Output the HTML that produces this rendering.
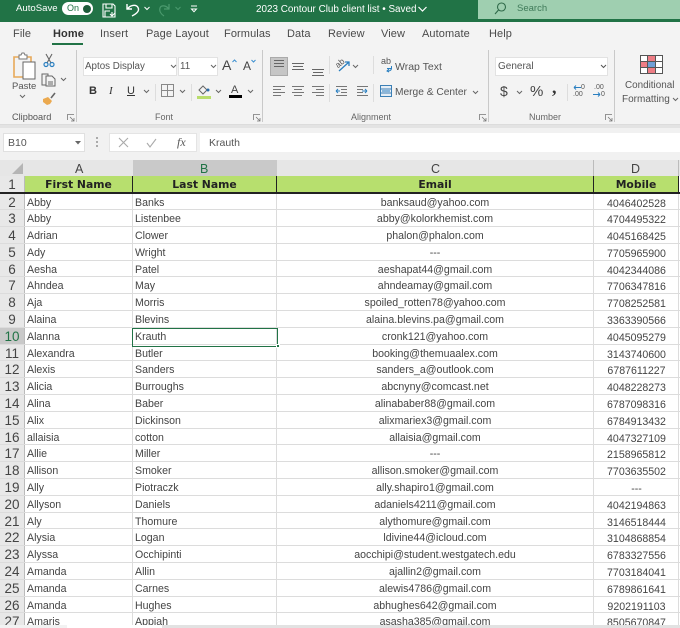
<!DOCTYPE html>
<html><head><meta charset="utf-8"><style>
html,body{margin:0;padding:0;background:#fff}
#p{position:relative;width:680px;height:628px;overflow:hidden;font-family:"Liberation Sans",sans-serif;color:#444;background:#fff;filter:blur(.3px)}
.a{position:absolute;white-space:nowrap}
.box{position:absolute;background:#fff;border:1px solid #e2e2e2;box-sizing:border-box}
.sep{position:absolute;width:1px;background:#c9c9c9}
svg{position:absolute;overflow:visible}
.t{font-size:11px;color:#4a4a4a;top:28px;letter-spacing:.1px}
.g{font-size:9px;color:#666;top:112px}
#grid{position:absolute;left:0;top:176px;width:680px}
.r{display:flex;height:16.8px;box-sizing:border-box;border-bottom:1px solid #dcdcdc;font-size:10.6px;line-height:18px;color:#444}
.r div{box-sizing:border-box;height:100%;white-space:nowrap;overflow:hidden;border-right:1px solid #dcdcdc}
.r .n{width:25px;background:#e8e8e8;font-size:13.5px;text-align:center;color:#444;border-right:1px solid #bbb;line-height:17px}
.r .A{width:108px;padding-left:2px}
.r .B{width:144px;padding-left:2px}
.r .C{width:317px;text-align:center}
.r .D{width:85px;text-align:center;line-height:20px;padding-left:1px}
.h{height:17.5px;border-bottom:2px solid #222}
.h div{background:#b7df6e;font-family:"DejaVu Sans",sans-serif;font-weight:bold;font-size:10.8px;color:#222;text-align:center;padding:0;border-right:1px solid #222;line-height:17px}
.h .n{background:#e8e8e8;font-family:"Liberation Sans",sans-serif;font-weight:normal;font-size:13.5px;border-right:1px solid #bbb}
</style></head><body><div id="p">

<div class="a" style="left:0;top:0;width:680px;height:22px;background:#217346"></div>
<div class="a" style="left:478px;top:0;width:202px;height:19px;background:#9fcfb0"></div>
<div class="a" style="left:16px;top:3px;font-size:9.600px;line-height:12px;color:#fff">AutoSave</div>
<div class="a" style="left:62px;top:2px;width:31px;height:13px;background:#fff;border-radius:7px"></div>
<div class="a" style="left:67px;top:3px;font-size:9px;color:#217346">On</div>
<div class="a" style="left:83px;top:4.500px;width:8px;height:8px;background:#1d5c3a;border-radius:50%"></div>
<svg style="left:102px;top:3px" width="16" height="16" fill="none" stroke="#fff" stroke-width="1.1"><path d="M1 1h10l2 2v11H1zM4 1v4h6V1M3 14V8h5M10 9v4M8 11l2 2 3-3"/></svg>
<svg style="left:126px;top:3px" width="16" height="14" fill="none" stroke="#fff" stroke-width="1.4"><path d="M1 1v5h5M1.500 6C4 2 10 1 12 4.500S10 11 6 13"/></svg>
<svg style="left:144px;top:6px" width="6" height="5" fill="none" stroke="#fff"><path d="M.5 1 3 3.500 5.500 1"/></svg>
<svg style="left:158px;top:3px" width="16" height="14" fill="none" stroke="#4b9a6e" stroke-width="1.2"><path d="M11 1v5H6M11 6C8 2 3 2 2 5s1 6 4 8"/></svg>
<svg style="left:175px;top:6px" width="6" height="5" fill="none" stroke="#4b9a6e"><path d="M.5 1 3 3.500 5.500 1"/></svg>
<svg style="left:190px;top:5px" width="8" height="8" fill="none" stroke="#fff"><path d="M1 1h6M1.500 4 4 6.800 6.500 4z"/></svg>
<div class="a" style="left:256px;top:4px;font-size:9.900px;color:#fff">2023 Contour Club client list • Saved</div>
<svg style="left:418px;top:6px" width="9" height="6" fill="none" stroke="#fff" stroke-width="1.2"><path d="M.5 1 4.500 5 8.500 1"/></svg>
<svg style="left:494px;top:2px" width="13" height="13" fill="none" stroke="#2f6a49" stroke-width="1.1"><circle cx="7.500" cy="5" r="4"/><path d="M4.500 8 1 12"/></svg>
<div class="a" style="left:517px;top:3px;font-size:9.500px;color:#3f7a59">Search</div>

<div class="a" style="left:0;top:22px;width:680px;height:103px;background:#f3f3f3"></div>
<div class="a t" style="left:13px">File</div>
<div class="a t" style="left:53px;color:#333;font-weight:bold">Home</div>
<div class="a" style="left:52px;top:43px;width:31px;height:2px;background:#217346"></div>
<div class="a t" style="left:100px">Insert</div>
<div class="a t" style="left:146px">Page Layout</div>
<div class="a t" style="left:224px">Formulas</div>
<div class="a t" style="left:287px">Data</div>
<div class="a t" style="left:328px">Review</div>
<div class="a t" style="left:381px">View</div>
<div class="a t" style="left:422px">Automate</div>
<div class="a t" style="left:489px">Help</div>

<svg style="left:13px;top:52px" width="24" height="28" fill="none"><path d="M1 5h17v20H1z" stroke="#e8a95a" stroke-width="1.600"/><path d="M6 7V3h2l1-2h2l1 2h2v4z" fill="#fff" stroke="#777"/><path d="M10 10h12v17H10z" fill="#fff" stroke="#666"/></svg>
<div class="a" style="left:12px;top:81px;font-size:9.500px;color:#555">Paste</div>
<svg style="left:19px;top:94px" width="7" height="5" fill="none" stroke="#666"><path d="M1 1l2.500 2.500L6 1"/></svg>
<svg style="left:43px;top:53px" width="12" height="14" fill="none"><path d="M3 1l5 9M9 1 4 10" stroke="#666" stroke-width="1.100"/><circle cx="3" cy="11.500" r="2" stroke="#2a7fc0" stroke-width="1.200"/><circle cx="9" cy="11.500" r="2" stroke="#2a7fc0" stroke-width="1.200"/></svg>
<svg style="left:41px;top:73px" width="16" height="14" fill="none" stroke="#666"><path d="M5 12H1V1h6v2"/><path d="M5 3h6l3 3v7H5z" fill="#f3f3f3"/><path d="M7 9h5M7 11h5"/></svg>
<svg style="left:60px;top:77px" width="7" height="5" fill="none" stroke="#666"><path d="M1 1l2.500 2.500L6 1"/></svg>
<svg style="left:42px;top:92px" width="14" height="13" fill="none"><path d="M1 7l5-2 4 4-2 3-3 1-4-3z" fill="#eba94f"/><path d="M9 6l4-5" stroke="#666" stroke-width="1.600"/></svg>
<div class="a g" style="left:12px;color:#555;font-size:9.200px">Clipboard</div>
<svg style="left:67px;top:114px" width="8" height="8" fill="none" stroke="#777" stroke-width=".8"><path d="M.5 6V.5H7M3 3l4 4M7 4v3H4"/></svg>
<div class="sep" style="left:76px;top:50px;height:72px"></div>

<div class="box" style="left:83px;top:57px;width:94px;height:19px"></div>
<div class="a" style="left:85px;top:61px;font-size:9.800px;color:#555">Aptos Display</div>
<svg style="left:170px;top:64px" width="7" height="5" fill="none" stroke="#666"><path d="M1 1l2.500 2.500L6 1"/></svg>
<div class="box" style="left:178px;top:57px;width:40px;height:19px"></div>
<div class="a" style="left:180px;top:61px;font-size:9.800px;color:#555">11</div>
<svg style="left:210px;top:64px" width="7" height="5" fill="none" stroke="#666"><path d="M1 1l2.500 2.500L6 1"/></svg>
<div class="a" style="left:222px;top:57px;font-size:14px;color:#444">A</div>
<svg style="left:232px;top:59px" width="5" height="4" fill="none" stroke="#3b8fcf"><path d="M.5 3 2.500 1l2 2"/></svg>
<div class="a" style="left:243px;top:59px;font-size:12px;color:#444">A</div>
<svg style="left:251px;top:59px" width="5" height="4" fill="none" stroke="#3b8fcf"><path d="M.5 1l2 2 2-2"/></svg>
<div class="a" style="left:89px;top:85px;font-size:11px;font-weight:bold;color:#333">B</div>
<div class="a" style="left:109px;top:85px;font-size:11px;font-style:italic;font-family:'Liberation Serif',serif;color:#333">I</div>
<div class="a" style="left:127px;top:85px;font-size:11px;text-decoration:underline;color:#333">U</div>
<svg style="left:143px;top:89px" width="7" height="5" fill="none" stroke="#666"><path d="M1 1l2.500 2.500L6 1"/></svg>
<div class="sep" style="left:155px;top:84px;height:17px;background:#ddd"></div>
<svg style="left:161px;top:84px" width="13" height="13" fill="none" stroke="#888"><path d="M.5.500h12v12H.5zM6.500.500v12M.5 6.500h12"/></svg>
<svg style="left:179px;top:89px" width="7" height="5" fill="none" stroke="#666"><path d="M1 1l2.500 2.500L6 1"/></svg>
<div class="sep" style="left:191px;top:84px;height:17px;background:#ddd"></div>
<svg style="left:197px;top:84px" width="14" height="15" fill="none"><path d="M2 6l4-4 4 4-4 4z" stroke="#666"/><circle cx="11" cy="6" r="1.500" fill="#2a6ca8"/><path d="M0 12h14v3H0z" fill="#b9dd6c"/></svg>
<svg style="left:215px;top:89px" width="7" height="5" fill="none" stroke="#666"><path d="M1 1l2.500 2.500L6 1"/></svg>
<div class="a" style="left:231px;top:84px;font-size:11px;color:#444">A</div>
<div class="a" style="left:229px;top:95px;width:13px;height:3px;background:#000"></div>
<svg style="left:247px;top:89px" width="7" height="5" fill="none" stroke="#666"><path d="M1 1l2.500 2.500L6 1"/></svg>
<div class="a g" style="left:155px">Font</div>
<svg style="left:253px;top:114px" width="8" height="8" fill="none" stroke="#777" stroke-width=".8"><path d="M.5 6V.5H7M3 3l4 4M7 4v3H4"/></svg>
<div class="sep" style="left:262px;top:50px;height:72px"></div>

<div class="a" style="left:270px;top:57px;width:18px;height:19px;background:#c6c6c6;border:1px solid #aaa;box-sizing:border-box"></div>
<svg style="left:272px;top:59px" width="52" height="17" stroke="#666"><path d="M2 1.500h10M2 4.500h10M2 7.500h10"/><path d="M20 4.500h12M21 7.500h10M20 10.500h12"/><path d="M40 10.500h12M41 13.500h10M40 16.500h12"/></svg>
<div class="sep" style="left:329px;top:56px;height:18px;background:#ddd"></div>
<div class="a" style="left:335px;top:58px;font-size:8.500px;color:#555;transform:rotate(-40deg);transform-origin:50% 50%">ab</div>
<svg style="left:336px;top:60px" width="15" height="12" fill="none" stroke="#2a7fc0" stroke-width="1.300"><path d="M3 11 13 2M9 2h4v4"/></svg>
<svg style="left:352px;top:64px" width="7" height="5" fill="none" stroke="#666"><path d="M1 1l2.500 2.500L6 1"/></svg>
<div class="sep" style="left:373px;top:56px;height:18px;background:#ddd"></div>
<svg style="left:273px;top:85px" width="51" height="13" stroke="#777"><path d="M0 1.500h12M0 4.500h8M0 7.500h12M0 10.500h8"/><path d="M19 1.500h12M21 4.500h8M19 7.500h12M21 10.500h8"/><path d="M39 1.500h12M43 4.500h8M39 7.500h12M43 10.500h8"/></svg>
<div class="sep" style="left:329px;top:84px;height:18px;background:#ddd"></div>
<svg style="left:335px;top:85px" width="34" height="13" fill="none" stroke="#777"><path d="M1 1.500h11M6 4.500h6M6 7.500h6M1 10.500h11"/><path d="M1 6h4M1 6l2-2M1 6l2 2" stroke="#2a7fc0"/><path d="M22 1.500h11M22 4.500h6M22 7.500h6M22 10.500h11"/><path d="M27 6h5M32 6l-2-2M32 6l-2 2" stroke="#2a7fc0"/></svg>
<div class="sep" style="left:373px;top:84px;height:18px;background:#ddd"></div>
<div class="a" style="left:381px;top:57px;font-size:9px;color:#555;line-height:9px">ab</div>
<svg style="left:381px;top:65px" width="12" height="7" fill="none" stroke="#2a7fc0"><path d="M6 3.500h4.500V1M10.500 3.500C10 6 8 6 6 6M8 4 6 6l2 1"/></svg>
<div class="a" style="left:395px;top:61px;font-size:10.500px;color:#555">Wrap Text</div>
<svg style="left:380px;top:85px" width="12" height="12"><path d="M.5.500h11v11H.5z" fill="#e5eef6" stroke="#3b7fb5"/><path d="M.5 4h11M.5 8h11" stroke="#3b7fb5"/><path d="M2 6h8" stroke="#2a7fc0"/></svg>
<div class="a" style="left:395px;top:87px;font-size:10.200px;color:#555">Merge &amp; Center</div>
<svg style="left:472px;top:90px" width="7" height="5" fill="none" stroke="#666"><path d="M1 1l2.500 2.500L6 1"/></svg>
<div class="a g" style="left:351px">Alignment</div>
<svg style="left:479px;top:114px" width="8" height="8" fill="none" stroke="#777" stroke-width=".8"><path d="M.5 6V.5H7M3 3l4 4M7 4v3H4"/></svg>
<div class="sep" style="left:488px;top:50px;height:72px"></div>

<div class="box" style="left:495px;top:57px;width:113px;height:19px"></div>
<div class="a" style="left:498px;top:61px;font-size:10px;color:#555">General</div>
<svg style="left:600px;top:64px" width="7" height="5" fill="none" stroke="#555"><path d="M1 1l2.500 2.500L6 1"/></svg>
<div class="a" style="left:500px;top:83px;font-size:14px;color:#444">$</div>
<svg style="left:516px;top:90px" width="7" height="5" fill="none" stroke="#666"><path d="M1 1l2.500 2.500L6 1"/></svg>
<div class="a" style="left:530px;top:83px;font-size:15px;color:#444">%</div>
<div class="a" style="left:552px;top:77px;font-size:18px;font-weight:bold;color:#333;font-family:'Liberation Serif',serif">,</div>
<div class="sep" style="left:567px;top:84px;height:17px;background:#ddd"></div>
<svg style="left:573px;top:84px" width="9" height="7" fill="none" stroke="#2a7fc0"><path d="M1 3.500h7M1 3.500l2-2M1 3.500l2 2"/></svg>
<div class="a" style="left:581px;top:84px;font-size:7px;color:#555;line-height:7px">0</div>
<div class="a" style="left:573px;top:91px;font-size:7px;color:#555;line-height:7px">.00</div>
<div class="a" style="left:594px;top:84px;font-size:7px;color:#555;line-height:7px">.00</div>
<svg style="left:593px;top:91px" width="9" height="7" fill="none" stroke="#2a7fc0"><path d="M0 3.500h7M7 3.500l-2-2M7 3.500l-2 2"/></svg>
<div class="a" style="left:601px;top:91px;font-size:7px;color:#555;line-height:7px">0</div>
<div class="a g" style="left:529px">Number</div>
<svg style="left:605px;top:114px" width="8" height="8" fill="none" stroke="#777" stroke-width=".8"><path d="M.5 6V.5H7M3 3l4 4M7 4v3H4"/></svg>
<div class="sep" style="left:614px;top:50px;height:72px"></div>

<svg style="left:640px;top:55px" width="23" height="19"><path d="M0 0h23v19H0z" fill="#fff"/><path d="M7 0h9v6H7zM0 6h7v7H0zM7 13h9v6H7z" fill="#ee7d85"/><path d="M7 6h9v7H7z" fill="#6f9fd6"/><path d="M.5.500h22v18H.5zM7.500 0v19M15.500 0v19M0 6.500h23M0 12.500h23" fill="none" stroke="#555"/></svg>
<div class="a" style="left:625px;top:80px;font-size:9.900px;color:#555">Conditional</div>
<div class="a" style="left:622px;top:94px;font-size:10px;color:#555">Formatting</div>
<svg style="left:672px;top:97px" width="7" height="5" fill="none" stroke="#666"><path d="M1 1l2.500 2.500L6 1"/></svg>

<div class="a" style="left:0;top:124px;width:680px;height:1px;background:#dcdcdc"></div>
<div class="a" style="left:0;top:125px;width:680px;height:35px;background:#f1f1f1"></div>
<div class="a" style="left:0;top:125px;width:680px;height:3px;background:#e3e3e3"></div>
<div class="box" style="left:3px;top:133px;width:82px;height:19px;border-color:#e0e0e0"></div>
<div class="a" style="left:8px;top:137px;font-size:10.500px;color:#555">B10</div>
<svg style="left:75px;top:141px" width="6" height="4"><path d="M0 0h6L3 3.500z" fill="#666"/></svg>
<svg style="left:96px;top:137px" width="3" height="11" fill="#aaa"><path d="M0 0h2v2H0zM0 4h2v2H0zM0 8h2v2H0z"/></svg>
<div class="box" style="left:109px;top:133px;width:88px;height:19px;border-color:#e4e4e4"></div>
<svg style="left:118px;top:137px" width="50" height="12" fill="none" stroke="#aaa" stroke-width="1.100"><path d="M1 1l9 9M10 1l-9 9"/><path d="M29 6l3 4 6-8"/></svg>
<div class="a" style="left:177px;top:135px;font-size:12px;font-style:italic;font-family:'Liberation Serif',serif;color:#555">fx</div>
<div class="a" style="left:200px;top:133px;width:480px;height:19px;background:#fff"></div>
<div class="a" style="left:209px;top:137px;font-size:10.500px;color:#555">Krauth</div>

<div class="a" style="left:0;top:160px;width:680px;height:16px;background:#e6e6e6"></div>
<div class="a" style="left:133px;top:160px;width:144px;height:16px;background:#c9c9c9"></div>
<svg style="left:12px;top:163px" width="11" height="11"><path d="M11 0v11H0z" fill="#b5b5b5"/></svg>
<div class="a" style="left:75px;top:162px;font-size:12.500px;color:#444">A</div>
<div class="a" style="left:200px;top:162px;font-size:12.500px;color:#217346">B</div>
<div class="a" style="left:431px;top:162px;font-size:12.500px;color:#444">C</div>
<div class="a" style="left:631px;top:162px;font-size:12.500px;color:#444">D</div>
<div class="a" style="left:593px;top:160px;width:1px;height:16px;background:#bbb"></div>
<div class="a" style="left:678px;top:160px;width:1px;height:16px;background:#bbb"></div>

<div id="grid">
<div class="r h"><div class="n">1</div><div class="A" style="padding:0">First Name</div><div class="B" style="padding:0">Last Name</div><div class="C">Email</div><div class="D" style="line-height:17px;padding:0">Mobile</div></div>
<div class="r"><div class="n">2</div><div class="A">Abby</div><div class="B">Banks</div><div class="C">banksaud@yahoo.com</div><div class="D">4046402528</div></div>
<div class="r"><div class="n">3</div><div class="A">Abby</div><div class="B">Listenbee</div><div class="C">abby@kolorkhemist.com</div><div class="D">4704495322</div></div>
<div class="r"><div class="n">4</div><div class="A">Adrian</div><div class="B">Clower</div><div class="C">phalon@phalon.com</div><div class="D">4045168425</div></div>
<div class="r"><div class="n">5</div><div class="A">Ady</div><div class="B">Wright</div><div class="C">---</div><div class="D">7705965900</div></div>
<div class="r"><div class="n">6</div><div class="A">Aesha</div><div class="B">Patel</div><div class="C">aeshapat44@gmail.com</div><div class="D">4042344086</div></div>
<div class="r"><div class="n">7</div><div class="A">Ahndea</div><div class="B">May</div><div class="C">ahndeamay@gmail.com</div><div class="D">7706347816</div></div>
<div class="r"><div class="n">8</div><div class="A">Aja</div><div class="B">Morris</div><div class="C">spoiled_rotten78@yahoo.com</div><div class="D">7708252581</div></div>
<div class="r"><div class="n">9</div><div class="A">Alaina</div><div class="B">Blevins</div><div class="C">alaina.blevins.pa@gmail.com</div><div class="D">3363390566</div></div>
<div class="r"><div class="n" style="background:#c9c9c9;color:#217346">10</div><div class="A">Alanna</div><div class="B">Krauth</div><div class="C">cronk121@yahoo.com</div><div class="D">4045095279</div></div>
<div class="r"><div class="n">11</div><div class="A">Alexandra</div><div class="B">Butler</div><div class="C">booking@themuaalex.com</div><div class="D">3143740600</div></div>
<div class="r"><div class="n">12</div><div class="A">Alexis</div><div class="B">Sanders</div><div class="C">sanders_a@outlook.com</div><div class="D">6787611227</div></div>
<div class="r"><div class="n">13</div><div class="A">Alicia</div><div class="B">Burroughs</div><div class="C">abcnyny@comcast.net</div><div class="D">4048228273</div></div>
<div class="r"><div class="n">14</div><div class="A">Alina</div><div class="B">Baber</div><div class="C">alinababer88@gmail.com</div><div class="D">6787098316</div></div>
<div class="r"><div class="n">15</div><div class="A">Alix</div><div class="B">Dickinson</div><div class="C">alixmariex3@gmail.com</div><div class="D">6784913432</div></div>
<div class="r"><div class="n">16</div><div class="A">allaisia</div><div class="B">cotton</div><div class="C">allaisia@gmail.com</div><div class="D">4047327109</div></div>
<div class="r"><div class="n">17</div><div class="A">Allie</div><div class="B">Miller</div><div class="C">---</div><div class="D">2158965812</div></div>
<div class="r"><div class="n">18</div><div class="A">Allison</div><div class="B">Smoker</div><div class="C">allison.smoker@gmail.com</div><div class="D">7703635502</div></div>
<div class="r"><div class="n">19</div><div class="A">Ally</div><div class="B">Piotraczk</div><div class="C">ally.shapiro1@gmail.com</div><div class="D">---</div></div>
<div class="r"><div class="n">20</div><div class="A">Allyson</div><div class="B">Daniels</div><div class="C">adaniels4211@gmail.com</div><div class="D">4042194863</div></div>
<div class="r"><div class="n">21</div><div class="A">Aly</div><div class="B">Thomure</div><div class="C">alythomure@gmail.com</div><div class="D">3146518444</div></div>
<div class="r"><div class="n">22</div><div class="A">Alysia</div><div class="B">Logan</div><div class="C">ldivine44@icloud.com</div><div class="D">3104868854</div></div>
<div class="r"><div class="n">23</div><div class="A">Alyssa</div><div class="B">Occhipinti</div><div class="C">aocchipi@student.westgatech.edu</div><div class="D">6783327556</div></div>
<div class="r"><div class="n">24</div><div class="A">Amanda</div><div class="B">Allin</div><div class="C">ajallin2@gmail.com</div><div class="D">7703184041</div></div>
<div class="r"><div class="n">25</div><div class="A">Amanda</div><div class="B">Carnes</div><div class="C">alewis4786@gmail.com</div><div class="D">6789861641</div></div>
<div class="r"><div class="n">26</div><div class="A">Amanda</div><div class="B">Hughes</div><div class="C">abhughes642@gmail.com</div><div class="D">9202191103</div></div>
<div class="r"><div class="n">27</div><div class="A">Amaris</div><div class="B">Appiah</div><div class="C">asasha385@gmail.com</div><div class="D">8505670847</div></div>
</div>

<div class="a" style="left:132px;top:327.500px;width:146px;height:19px;border:1.500px solid #217346;box-sizing:border-box"></div>
<div class="a" style="left:275.500px;top:344px;width:4px;height:4px;background:#217346;border:1px solid #fff;box-sizing:border-box"></div>
<div class="a" style="left:0;top:625px;width:67px;height:3px;background:#f2f2f2"></div>
<div class="a" style="left:67px;top:625px;width:95px;height:3px;background:#fff"></div>
<div class="a" style="left:162px;top:625px;width:518px;height:3px;background:#e2e2e2"></div>
</div></body></html>
